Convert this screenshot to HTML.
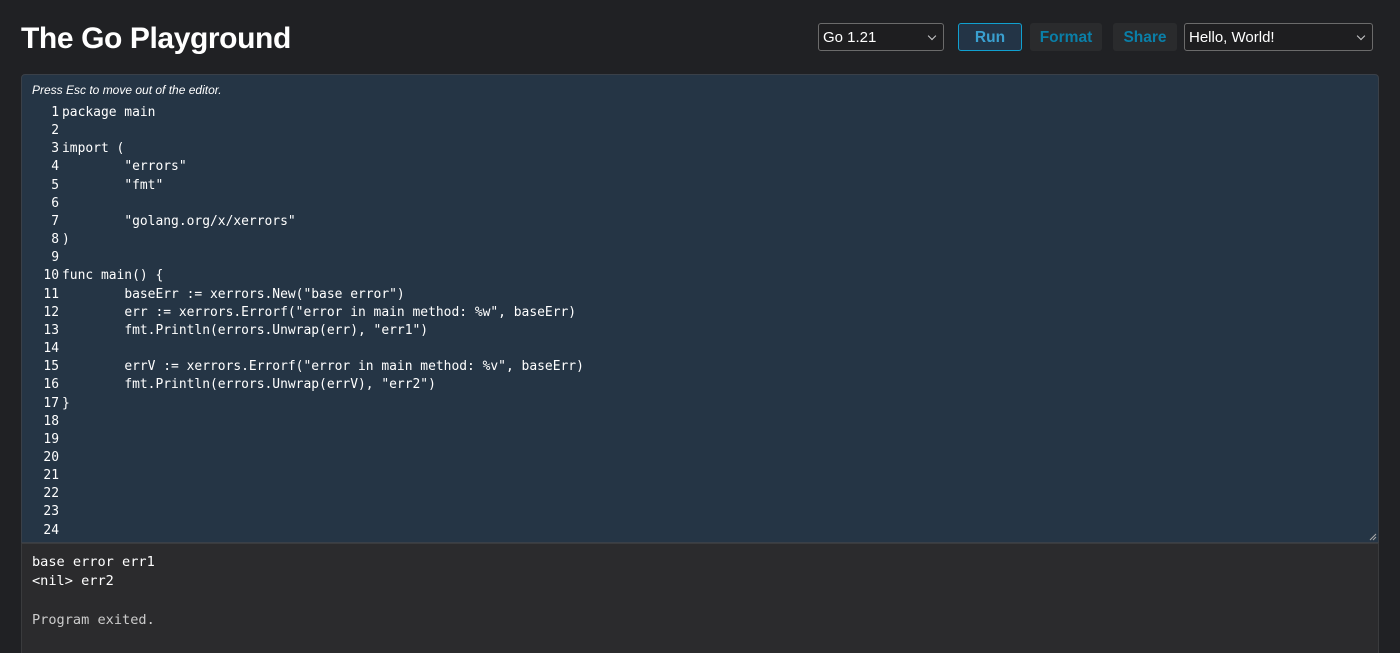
<!DOCTYPE html>
<html><head><meta charset="utf-8"><style>
*{box-sizing:border-box;margin:0;padding:0}
html,body{width:1400px;height:646px;overflow:hidden;background:#202124;font-family:"Liberation Sans",sans-serif}
h1{position:absolute;left:21px;top:22px;color:#fff;font-size:30px;font-weight:bold;letter-spacing:-0.4px}
.sel{position:absolute;top:23px;height:28px;border:1px solid #6b6b6b;border-radius:3px;background:#1e1e20;color:#fff;font-size:15px;line-height:28px;padding-left:4px}
.sel:after{content:"";position:absolute;right:8px;top:9px;width:5px;height:5px;border-right:1px solid #ccc;border-bottom:1px solid #ccc;transform:rotate(45deg)}
.btn{position:absolute;top:23px;height:28px;border-radius:3px;background:#2a2b2d;color:#0a7fa8;font-size:15.5px;line-height:30px;text-align:center;font-weight:bold}
#ed{position:absolute;left:21px;top:74px;width:1358px;height:469px;background:#253545;border:1px solid #3a4048;border-radius:4px 4px 0 0}
.hint{position:absolute;left:10px;top:8px;color:#fff;font-size:12px;font-style:italic}
pre{font-family:"DejaVu Sans Mono","Liberation Mono",monospace;font-size:12.95px;line-height:18.15px;color:#fff}
#ln{position:absolute;left:0;top:29px;width:37px;text-align:right}
#code{position:absolute;left:40px;top:29px;tab-size:8}
#out{position:absolute;left:21px;top:543px;width:1358px;height:110px;background:#2b2b2d;border-left:1px solid #3a3b3d;border-right:1px solid #3a3b3d;border-top:1px solid #3a3b3d}
#out pre{position:absolute;left:10px;top:9px;font-size:13.6px;line-height:19.2px;color:#fff}
</style></head><body>
<h1>The Go Playground</h1>
<div class="sel" style="left:818px;width:126px">Go 1.21</div>
<div class="btn" style="left:958px;width:64px;background:#233446;border:1px solid #10a0d0;line-height:28px;color:#3aa0d0">Run</div>
<div class="btn" style="left:1030px;width:72px">Format</div>
<div class="btn" style="left:1113px;width:64px">Share</div>
<div class="sel" style="left:1184px;width:189px">Hello, World!</div>
<div id="ed">
<div class="hint">Press Esc to move out of the editor.</div>
<pre id="ln">1
2
3
4
5
6
7
8
9
10
11
12
13
14
15
16
17
18
19
20
21
22
23
24</pre>
<pre id="code">package main

import (
	"errors"
	"fmt"

	"golang.org/x/xerrors"
)

func main() {
	baseErr := xerrors.New("base error")
	err := xerrors.Errorf("error in main method: %w", baseErr)
	fmt.Println(errors.Unwrap(err), "err1")

	errV := xerrors.Errorf("error in main method: %v", baseErr)
	fmt.Println(errors.Unwrap(errV), "err2")
}</pre>
<svg style="position:absolute;right:1px;bottom:1px" width="8" height="8"><path d="M1 7L7 1M4 7L7 4" stroke="#aaa" stroke-width="1"/></svg>
</div>
<div id="out"><pre>base error err1
&lt;nil&gt; err2

<span style="color:#ccc">Program exited.</span></pre></div>
</body></html>
